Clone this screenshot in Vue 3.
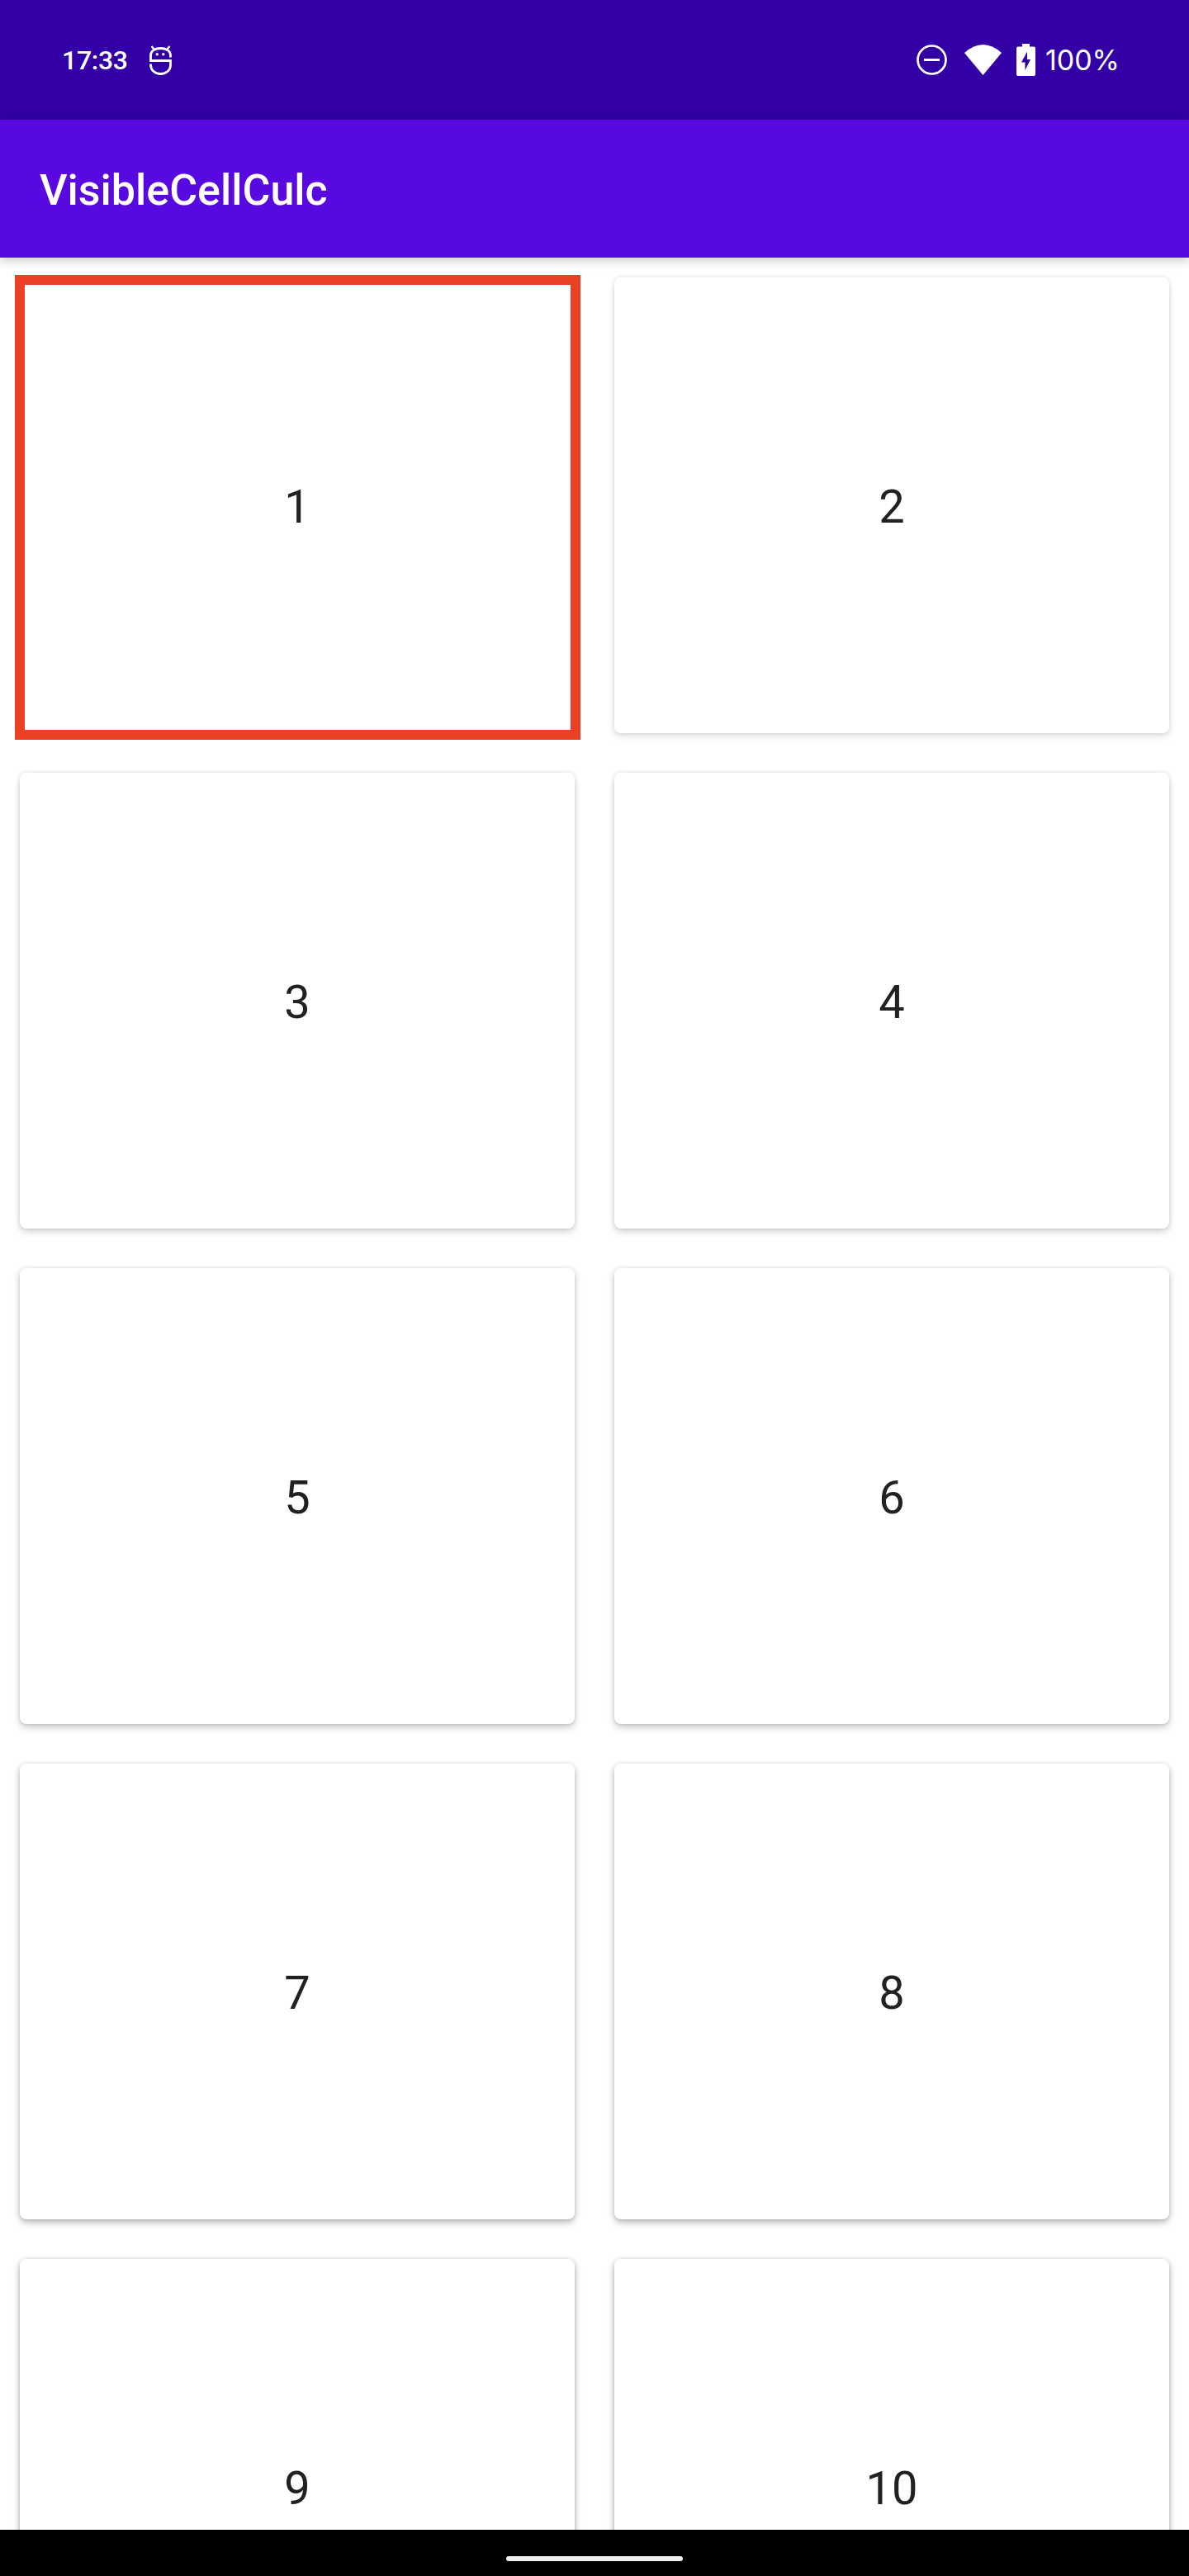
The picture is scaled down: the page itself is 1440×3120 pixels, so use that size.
<script setup>
const cards = [1, 2, 3, 4, 5, 6, 7, 8, 9, 10]

// The lower a card sits on the screen, the stronger its bottom shadow.
function cardStyle(n) {
  const row = Math.floor((n - 1) / 2)
  return { '--shadow-alpha': (0.12 + row * 0.05).toFixed(2) }
}
</script>

<template>
  <div class="screen">
    <header class="status">
      <div class="status-left">
        <span class="time">17:33</span>
        <svg class="icon-bot" viewBox="0 0 27 36" fill="none" stroke="#fff" stroke-width="2.8">
          <path d="M1.5 19.500V12C1.500 6.500 7 3.500 13.500 3.500S25.500 6.500 25.500 12V14.500" />
          <path d="M0.500 18.500H25.500V24C25.500 30 20 34.500 13.500 34.500S1.500 30 1.500 24V22.500" />
          <path d="M2.500 1L5.500 4.500M24.500 1L21.500 4.500" stroke-width="2.400" />
          <circle cx="9.300" cy="10.800" r="1.700" fill="#fff" stroke="none" />
          <circle cx="16.800" cy="10.800" r="1.700" fill="#fff" stroke="none" />
        </svg>
      </div>
      <div class="status-right">
        <svg class="icon-dnd" viewBox="0 0 37 37" fill="none" stroke="#fff">
          <circle cx="18.500" cy="18.500" r="17" stroke-width="2.700" />
          <path d="M9 18.500H28" stroke-width="3" />
        </svg>
        <svg class="icon-wifi" viewBox="0 0 45 37" fill="#fff">
          <path d="M0 10Q22.500 -10 45 10L22.500 37Z" />
        </svg>
        <svg class="icon-batt" viewBox="0 0 23 39" fill="#fff">
          <path d="M7 0h9v3.500h5a2 2 0 0 1 2 2V37a2 2 0 0 1-2 2H2a2 2 0 0 1-2-2V5.500a2 2 0 0 1 2-2h5Z" />
          <path d="M13 9.500L6 22.500H10.500V32L17 19H13Z" fill="#3200a5" />
        </svg>
        <span class="pct">100%</span>
      </div>
    </header>
    <div class="appbar">VisibleCellCulc</div>
    <main class="content">
      <div class="grid">
        <div
          v-for="n in cards"
          :key="n"
          class="card"
          :class="{ highlighted: n === 1 }"
          :style="cardStyle(n)"
        >{{ n }}</div>
      </div>
    </main>
    <footer class="nav"><span class="handle"></span></footer>
  </div>
</template>

<style scoped>
.screen {
  width: 1440px;
  height: 3120px;
  display: flex;
  flex-direction: column;
  overflow: hidden;
  background: #fff;
  font-family: Roboto, sans-serif;
}
.status {
  flex: 0 0 145px;
  box-sizing: border-box;
  background: #3200a5;
  color: #fff;
  display: flex;
  justify-content: space-between;
  align-items: center;
  padding: 0 84px 0 75px;
}
.status-left {
  display: flex;
  align-items: center;
  gap: 26px;
}
.time {
  font-size: 32px;
  font-weight: 500;
  letter-spacing: -0.3px;
}
.icon-bot {
  width: 27px;
  height: 36px;
}
.status-right {
  display: flex;
  align-items: center;
}
.icon-dnd {
  width: 37px;
  height: 37px;
  margin-right: 21px;
}
.icon-wifi {
  width: 45px;
  height: 37px;
  margin-right: 18px;
}
.icon-batt {
  width: 23px;
  height: 39px;
  margin-right: 12px;
}
.pct {
  font-family: Inter, sans-serif;
  font-size: 34px;
}
.appbar {
  position: relative;
  z-index: 1;
  flex: 0 0 167px;
  box-sizing: border-box;
  padding: 3px 0 0 48px;
  display: flex;
  align-items: center;
  background: #5809df;
  color: #fff;
  font-size: 52px;
  font-weight: 500;
  box-shadow: 0 4px 12px rgba(0, 0, 0, 0.2);
}
.content {
  flex: 1;
  min-height: 0;
  overflow: hidden;
  padding: 24px 24px 0;
}
.grid {
  display: grid;
  grid-template-columns: 672px 672px;
  grid-auto-rows: 552px;
  gap: 48px;
}
.card {
  position: relative;
  box-sizing: border-box;
  padding-top: 4px;
  display: flex;
  align-items: center;
  justify-content: center;
  border-radius: 8px;
  background: #fff;
  color: #212121;
  font-size: 56px;
  box-shadow: 0 4px 8px rgba(0, 0, 0, var(--shadow-alpha)), 0 0 5px rgba(0, 0, 0, 0.1);
}
.highlighted {
  box-shadow: none;
}
.highlighted::after {
  content: "";
  position: absolute;
  top: -3px;
  left: -6px;
  right: -7px;
  bottom: -8px;
  border: 12px solid #ea4125;
}
.nav {
  flex: 0 0 56px;
  background: #000;
  display: flex;
  justify-content: center;
  padding-top: 32px;
  box-sizing: border-box;
}
.handle {
  width: 214px;
  height: 6px;
  border-radius: 3px;
  background: #eee;
}
</style>
